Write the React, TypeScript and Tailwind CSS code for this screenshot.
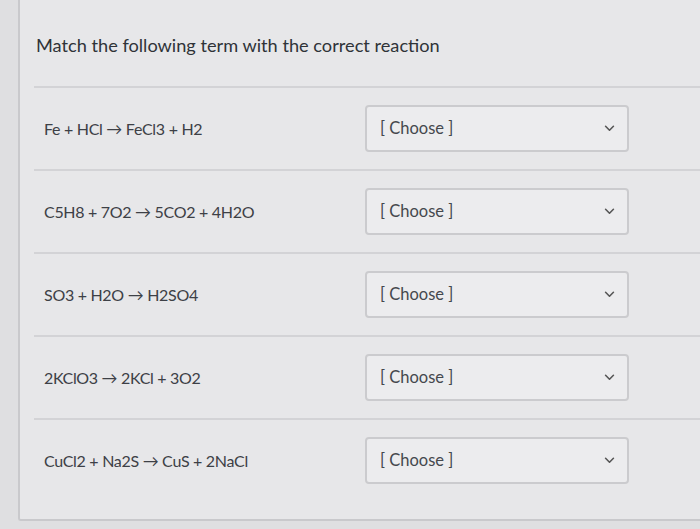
import React from "react";

const rows = [
  "Fe + HCl → FeCl3 + H2",
  "C5H8 + 7O2 → 5CO2 + 4H2O",
  "SO3 + H2O → H2SO4",
  "2KClO3 → 2KCl + 3O2",
  "CuCl2 + Na2S → CuS + 2NaCl",
];

function Chevron() {
  return (
    <svg width="11" height="7" viewBox="0 0 12 8" fill="none">
      <path d="M1.5 1.5 L6 6 L10.5 1.5" stroke="#555" strokeWidth="1.8" strokeLinecap="round" strokeLinejoin="round" />
    </svg>
  );
}

export default function App() {
  return (
    <div
      className="w-[700px] h-[529px] overflow-hidden bg-[#dfdfe1] pl-[18px]"
      style={{ fontFamily: "Lato, 'Open Sans', 'DejaVu Sans', sans-serif" }}
    >
      <div className="w-[720px] h-[521px] bg-[#e7e7e9] border-l-2 border-b-2 border-[#c9c9cc] rounded-bl-[3px]">
        <div className="pt-[32px] pl-[16px] h-[86px] text-[18.2px] text-[#2f3338] leading-[26px]">
          Match the following term with the correct reaction
        </div>
        <div className="pl-[14px]">
          {rows.map((r) => (
            <div
              key={r}
              className="h-[83px] border-t-2 border-[#d3d3d6] flex items-center"
            >
              <div className="w-[331px] pl-[10px] text-[16px] text-[#3d4046] tracking-[-0.3px]">
                {r}
              </div>
              <div className="w-[264px] h-[47px] bg-[#ececee] border-2 border-[#cbcbce] rounded-[4px] flex items-center justify-between pl-[13px] pr-[12px]">
                <span className="text-[16.5px] text-[#45484d]">[ Choose ]</span>
                <Chevron />
              </div>
            </div>
          ))}
        </div>
      </div>
    </div>
  );
}
